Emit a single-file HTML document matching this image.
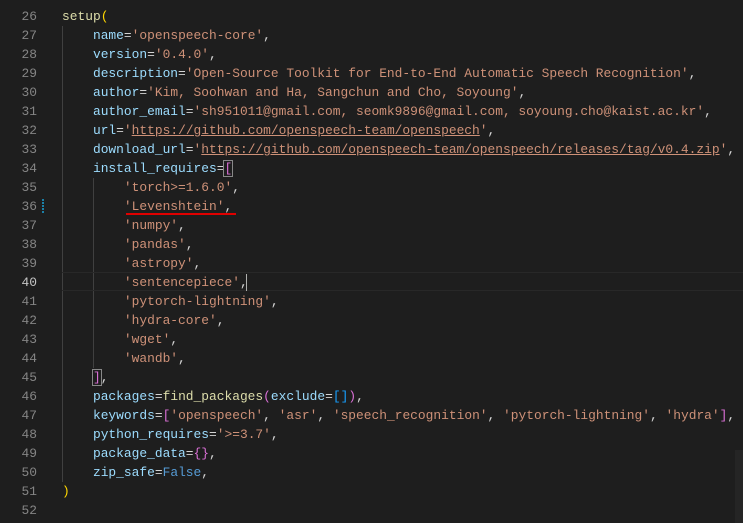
<!DOCTYPE html>
<html><head><style>
body{margin:0;background:#1e1e1e;width:743px;height:523px;overflow:hidden;position:relative;font-family:"Liberation Mono",monospace;font-size:12.9px;}
.l{position:absolute;left:0;height:19px;line-height:19px;white-space:pre;width:743px;}
.n{position:absolute;left:0;width:37px;text-align:right;color:#858585;}
.c{position:absolute;left:62px;color:#d4d4d4;}
.v{color:#9cdcfe}.s{color:#ce9178}.f{color:#dcdcaa}.y{color:#ffd700}.p{color:#da70d6}.b{color:#179fff}.k{color:#569cd6}
.u{text-decoration:underline;}
.g{position:absolute;width:1px;background:#404040;}
</style></head><body>
<div class="g" style="left:62px;top:26px;height:456px"></div>
<div class="g" style="left:93px;top:178px;height:190px"></div>
<div style="position:absolute;left:62px;top:272px;width:681px;height:17px;border-top:1px solid #282828;border-bottom:1px solid #282828"></div>
<div style="position:absolute;left:42px;top:199px;width:2px;height:14px;background:repeating-linear-gradient(#1b81a8 0 2px,transparent 2px 3px)"></div>
<div style="position:absolute;left:735px;top:450px;width:8px;height:73px;background:#252525"></div>

<div class="l" style="top:7px"><span class="n">26</span><span class="c"><span class="f">setup</span><span class="y">(</span></span></div>
<div class="l" style="top:26px"><span class="n">27</span><span class="c">    <span class="v">name</span>=<span class="s">'openspeech-core'</span>,</span></div>
<div class="l" style="top:45px"><span class="n">28</span><span class="c">    <span class="v">version</span>=<span class="s">'0.4.0'</span>,</span></div>
<div class="l" style="top:64px"><span class="n">29</span><span class="c">    <span class="v">description</span>=<span class="s">'Open-Source Toolkit for End-to-End Automatic Speech Recognition'</span>,</span></div>
<div class="l" style="top:83px"><span class="n">30</span><span class="c">    <span class="v">author</span>=<span class="s">'Kim, Soohwan and Ha, Sangchun and Cho, Soyoung'</span>,</span></div>
<div class="l" style="top:102px"><span class="n">31</span><span class="c">    <span class="v">author_email</span>=<span class="s">'sh951011@gmail.com, seomk9896@gmail.com, soyoung.cho@kaist.ac.kr'</span>,</span></div>
<div class="l" style="top:121px"><span class="n">32</span><span class="c">    <span class="v">url</span>=<span class="s">'<span class="u">https://github.com/openspeech-team/openspeech</span>'</span>,</span></div>
<div class="l" style="top:140px"><span class="n">33</span><span class="c">    <span class="v">download_url</span>=<span class="s">'<span class="u">https://github.com/openspeech-team/openspeech/releases/tag/v0.4.zip</span>'</span>,</span></div>
<div class="l" style="top:159px"><span class="n">34</span><span class="c">    <span class="v">install_requires</span>=<span class="p" style="outline:1px solid #888">[</span></span></div>
<div class="l" style="top:178px"><span class="n">35</span><span class="c">        <span class="s">'torch&gt;=1.6.0'</span>,</span></div>
<div class="l" style="top:197px"><span class="n">36</span><span class="c">        <span class="s">'Levenshtein'</span>,</span></div>
<div style="position:absolute;left:126px;top:213px;width:110px;height:2px;background:#e00000"></div>
<div class="l" style="top:216px"><span class="n">37</span><span class="c">        <span class="s">'numpy'</span>,</span></div>
<div class="l" style="top:235px"><span class="n">38</span><span class="c">        <span class="s">'pandas'</span>,</span></div>
<div class="l" style="top:254px"><span class="n">39</span><span class="c">        <span class="s">'astropy'</span>,</span></div>
<div class="l" style="top:273px"><span class="n" style="color:#c6c6c6">40</span><span class="c">        <span class="s">'sentencepiece'</span>,</span></div>
<div style="position:absolute;left:246px;top:274px;width:1px;height:17px;background:#aeafad"></div>
<div class="l" style="top:292px"><span class="n">41</span><span class="c">        <span class="s">'pytorch-lightning'</span>,</span></div>
<div class="l" style="top:311px"><span class="n">42</span><span class="c">        <span class="s">'hydra-core'</span>,</span></div>
<div class="l" style="top:330px"><span class="n">43</span><span class="c">        <span class="s">'wget'</span>,</span></div>
<div class="l" style="top:349px"><span class="n">44</span><span class="c">        <span class="s">'wandb'</span>,</span></div>
<div class="l" style="top:368px"><span class="n">45</span><span class="c">    <span class="p" style="outline:1px solid #888">]</span>,</span></div>
<div class="l" style="top:387px"><span class="n">46</span><span class="c">    <span class="v">packages</span>=<span class="f">find_packages</span><span class="p">(</span><span class="v">exclude</span>=<span class="b">[]</span><span class="p">)</span>,</span></div>
<div class="l" style="top:406px"><span class="n">47</span><span class="c">    <span class="v">keywords</span>=<span class="p">[</span><span class="s">'openspeech'</span>, <span class="s">'asr'</span>, <span class="s">'speech_recognition'</span>, <span class="s">'pytorch-lightning'</span>, <span class="s">'hydra'</span><span class="p">]</span>,</span></div>
<div class="l" style="top:425px"><span class="n">48</span><span class="c">    <span class="v">python_requires</span>=<span class="s">'&gt;=3.7'</span>,</span></div>
<div class="l" style="top:444px"><span class="n">49</span><span class="c">    <span class="v">package_data</span>=<span class="p">{}</span>,</span></div>
<div class="l" style="top:463px"><span class="n">50</span><span class="c">    <span class="v">zip_safe</span>=<span class="k">False</span>,</span></div>
<div class="l" style="top:482px"><span class="n">51</span><span class="c"><span class="y">)</span></span></div>
<div class="l" style="top:501px"><span class="n">52</span></div>
</body></html>
